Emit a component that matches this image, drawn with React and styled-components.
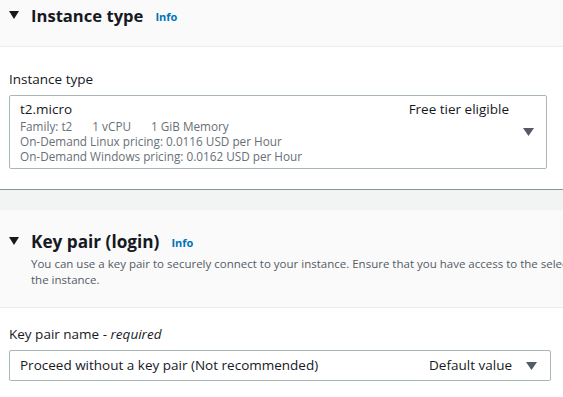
import React from "react";
import styled, { createGlobalStyle } from "styled-components";

const Global = createGlobalStyle`
  html, body { margin: 0; padding: 0; background: #ffffff; }
  body { font-family: "Open Sans", "Noto Sans", sans-serif; color: #16191f; overflow: hidden; }
  * { box-sizing: border-box; }
`;

const Page = styled.div`
  width: 563px;
  height: 397px;
  overflow: hidden;
  display: flex;
  flex-direction: column;
`;

const Panel = styled.section`
  background: #ffffff;
  border-bottom: ${(p) => (p.$last ? "none" : "1px solid #879596")};
`;

const Header = styled.div`
  background: #fafafa;
  border-bottom: 1px solid #eaeded;
  padding: ${(p) => p.$pad};
`;

const TitleRow = styled.div`
  display: flex;
  align-items: center;
  height: 30px;
`;

const Caret = styled.svg`
  width: 10px;
  height: 8px;
  margin-left: 9px;
  margin-right: 12px;
  flex: none;
`;

const Title = styled.h2`
  margin: 0;
  font-size: ${(p) => p.$size}px;
  font-weight: 700;
  color: #16191f;
`;

const Info = styled.a`
  margin-left: 12px;
  font-size: 11px;
  font-weight: 700;
  color: #0073bb;
  text-decoration: none;
  position: relative;
  top: 1px;
`;

const Desc = styled.p`
  margin: 0 0 0 31px;
  font-size: 11.5px;
  line-height: 16px;
  color: #545b64;
  white-space: nowrap;
`;

const Body = styled.div`
  padding: ${(p) => p.$pad};
`;

const Label = styled.div`
  font-size: 13.5px;
  line-height: 18px;
  color: #16191f;
  margin-bottom: 7px;
  em { font-style: italic; }
`;

const SelectBox = styled.div`
  width: ${(p) => p.$w}px;
  border: 1px solid #aab7b8;
  border-radius: 2px;
  background: #fff;
  display: flex;
  align-items: center;
  gap: 14px;
  padding: ${(p) => p.$pad};
`;

const Main = styled.div`
  flex: 1;
  min-width: 0;
`;

const Value = styled.div`
  font-size: 13.5px;
  line-height: 19px;
  color: #16191f;
  white-space: nowrap;
`;

const Meta = styled.div`
  font-size: 11.75px;
  line-height: 15px;
  color: #687078;
  white-space: nowrap;
  display: flex;
  span + span { margin-left: 20px; }
`;

const Tag = styled.div`
  font-size: 13.5px;
  line-height: 19px;
  color: #16191f;
  white-space: nowrap;
  align-self: ${(p) => (p.$top ? "flex-start" : "center")};
`;

const Arrow = styled.svg`
  width: 11px;
  height: 8px;
  flex: none;
`;

const Gap = styled.div`
  height: 20px;
  background: #f2f3f3;
`;

const DownCaret = () => (
  <Caret viewBox="0 0 10 8">
    <polygon points="0,0 10,0 5,8" fill="#16191f" />
  </Caret>
);

const SelArrow = () => (
  <Arrow viewBox="0 0 11 8">
    <polygon points="0,0 11,0 5.5,8" fill="#545b64" />
  </Arrow>
);

export default function App() {
  return (
    <Page>
      <Global />
      <Panel>
        <Header $pad="0 0 16px 0">
          <TitleRow>
            <DownCaret />
            <Title $size={16.6}>Instance type</Title>
            <Info>Info</Info>
          </TitleRow>
        </Header>
        <Body $pad="23px 16px 20px 9px">
          <Label>Instance type</Label>
          <SelectBox $w={538} $pad="4px 12px 4px 10px">
            <Main>
              <Value>t2.micro</Value>
              <Meta>
                <span>Family: t2</span>
                <span>1 vCPU</span>
                <span>1 GiB Memory</span>
              </Meta>
              <Meta>On-Demand Linux pricing: 0.0116 USD per Hour</Meta>
              <Meta>On-Demand Windows pricing: 0.0162 USD per Hour</Meta>
            </Main>
            <Tag $top>Free tier eligible</Tag>
            <SelArrow />
          </SelectBox>
        </Body>
      </Panel>
      <Gap />
      <Panel $last>
        <Header $pad="16px 0 19px 0">
          <TitleRow>
            <DownCaret />
            <Title $size={17.2}>Key pair (login)</Title>
            <Info>Info</Info>
          </TitleRow>
          <Desc>
            You can use a key pair to securely connect to your instance. Ensure that you have access to the selected key pair before you launch
            <br />
            the instance.
          </Desc>
        </Header>
        <Body $pad="17px 12px 0 9px">
          <Label>
            Key pair name - <em>required</em>
          </Label>
          <SelectBox $w={542} $pad="5px 13px 5px 10px">
            <Main>
              <Value>Proceed without a key pair (Not recommended)</Value>
            </Main>
            <Tag>Default value</Tag>
            <SelArrow />
          </SelectBox>
        </Body>
      </Panel>
    </Page>
  );
}
